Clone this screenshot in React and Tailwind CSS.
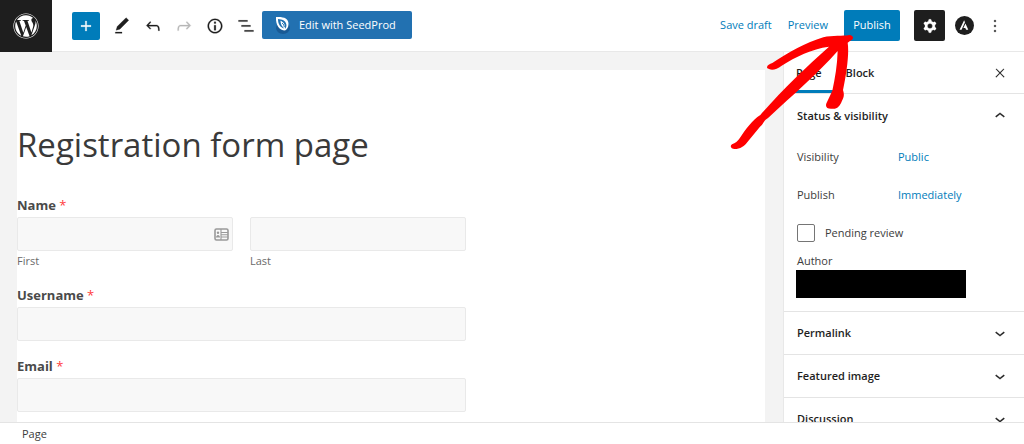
import { useState } from "react";
import { FaWordpress } from "react-icons/fa";

const icons = {
  plus: "M18 11.2h-5.2V6h-1.6v5.2H6v1.6h5.2V18h1.6v-5.2H18z",
  edit: "M20.1 5.1L16.9 2 6.2 12.7l-1.3 4.4 4.5-1.3L20.1 5.1zM4 20.8h8v-1.5H4v1.5z",
  undo: "M18.3 11.7c-.6-.6-1.4-.9-2.3-.9H6.7l2.9-3.3-1.1-1-4.5 5L8.5 16l1-1-2.7-2.7H16c.5 0 .9.2 1.3.5 1 1 1 3.4 1 4.5v.3h1.5v-.2c0-1.5 0-4.3-1.5-5.7z",
  redo: "M15.6 6.5l-1.1 1 2.9 3.3H8c-.9 0-1.7.3-2.3.9-1.4 1.5-1.4 4.2-1.4 5.6v.2h1.5v-.3c0-1.1 0-3.5 1-4.5.3-.3.7-.5 1.3-.5h9.2L14.5 15l1.1 1.1 4.6-4.6-4.6-5z",
  info: "M12 3.2c-4.8 0-8.8 3.9-8.8 8.8 0 4.8 3.9 8.8 8.8 8.8 4.8 0 8.8-3.9 8.8-8.8 0-4.8-4-8.8-8.8-8.8zm0 16c-4 0-7.2-3.3-7.2-7.2C4.8 8 8 4.8 12 4.8s7.2 3.3 7.2 7.2c0 4-3.2 7.2-7.2 7.2zM11 17h2v-6h-2v6zm0-8h2V7h-2v2z",
  list: "M13.8 5.2H3v1.5h10.8V5.2zm-3.6 12v1.5H21v-1.5H10.2zm7.2-6H6.6v1.5h10.8v-1.5z",
  close:
    "M13 11.8l6.1-6.3-1-1-6.1 6.2-6.1-6.2-1 1 6.1 6.3-6.5 6.7 1 1 6.5-6.6 6.5 6.6 1-1z",
  up: "M6.5 12.4L12 8l5.5 4.4-.9 1.2L12 10l-4.5 3.6-1-1.2z",
  down: "M17.5 11.6L12 16l-5.5-4.4.9-1.2L12 14l4.5-3.6 1 1.2z",
  more: "M13 19h-2v-2h2v2zm0-6h-2v-2h2v2zm0-6h-2V5h2v2z",
  cog: "M10.289 4.836A1 1 0 0111.275 4h1.306a1 1 0 01.987.836l.244 1.466c.787.26 1.503.679 2.108 1.218l1.393-.522a1 1 0 011.216.437l.653 1.13a1 1 0 01-.23 1.273l-1.148.944a6.025 6.025 0 010 2.435l1.149.946a1 1 0 01.23 1.272l-.653 1.13a1 1 0 01-1.216.437l-1.394-.522c-.605.54-1.32.958-2.108 1.218l-.244 1.466a1 1 0 01-.987.836h-1.306a1 1 0 01-.986-.836l-.244-1.466a5.995 5.995 0 01-2.108-1.218l-1.394.522a1 1 0 01-1.217-.436l-.653-1.131a1 1 0 01.23-1.272l1.149-.946a6.026 6.026 0 010-2.435l-1.148-.944a1 1 0 01-.23-1.272l.653-1.131a1 1 0 011.217-.437l1.393.522a5.994 5.994 0 012.108-1.218l.244-1.466zM14.929 12a3 3 0 11-6 0 3 3 0 016 0z",
};

function Icon({ name, className = "size-5" }) {
  return (
    <svg
      viewBox="0 0 24 24"
      fill="currentColor"
      fillRule="evenodd"
      stroke="currentColor"
      strokeWidth="0.3"
      className={className}
      aria-hidden="true"
    >
      <path d={icons[name]} />
    </svg>
  );
}

function ToolButton({ name, label, disabled }) {
  return (
    <button
      type="button"
      aria-label={label}
      disabled={disabled}
      className="flex h-8 w-[31px] items-center justify-center disabled:text-[#b8b8b8]"
    >
      <Icon name={name} />
    </button>
  );
}

function SeedProdLogo() {
  return (
    <svg viewBox="0 0 16 18" className="h-[18px] w-4" aria-hidden="true">
      <ellipse cx="8" cy="12" rx="7" ry="6" fill="#195a95" />
      <path
        d="M1 1c7-.6 12.500 1 12.500 7 0 3-1.500 5.500-3.500 6.500C4.500 14 .6 10 1 1z"
        fill="#fff"
      />
      <path
        d="M3 3c4 .2 7.500 1.500 8.300 5.200.4 2-.2 3.600-1.300 4.600C10 9 8 6 5.200 4.600 7.500 7 8.800 9.500 8.700 12.500 5 11 3 8 3 3z"
        fill="#2271b1"
      />
      <path d="M5.500 5c3 1 5 3.500 4.500 7.500C7 11 5.700 8.500 5.500 5z" fill="#fff" />
      <path d="M7 7c1.500 1 2.300 2.500 2.300 4.200" stroke="#2271b1" fill="none" />
    </svg>
  );
}

function ContactIcon() {
  return (
    <svg
      viewBox="0 0 15 13"
      className="absolute right-1 top-[11px] h-[13px] w-[15px]"
      fill="none"
      stroke="#999"
      aria-hidden="true"
    >
      <rect x="1" y="1" width="13" height="11" rx="1.5" strokeWidth="1.6" />
      <path d="M7 1v11M7 4.500h7M7 6.700h7M7 9h7" strokeWidth="1.1" />
      <circle cx="4" cy="4.800" r="1.200" fill="#999" stroke="none" />
      <path d="M2 9.500c0-3.500 4-3.500 4 0z" fill="#999" stroke="none" />
    </svg>
  );
}

function TopBar() {
  return (
    <header className="flex h-[52px] shrink-0 items-center border-b border-[#e8e8e8] bg-white">
      <a
        href="#dashboard"
        aria-label="View pages"
        className="flex size-[52px] shrink-0 items-center justify-center bg-[#1e1e1e] text-white"
      >
        <FaWordpress size={26} />
      </a>
      <button
        type="button"
        aria-label="Add block"
        className="ml-5 mr-[6px] flex size-7 items-center justify-center rounded-xs bg-[#007cba] text-white"
      >
        <Icon name="plus" />
      </button>
      <ToolButton name="edit" label="Tools" />
      <ToolButton name="undo" label="Undo" />
      <ToolButton name="redo" label="Redo" disabled />
      <ToolButton name="info" label="Details" />
      <ToolButton name="list" label="List view" />
      <button
        type="button"
        className="mb-px ml-px flex h-7 w-[150px] items-center gap-2 rounded-xs bg-[#2271b1] pl-[13px] text-[11px] text-white"
      >
        <SeedProdLogo />
        Edit with SeedProd
      </button>

      <div className="ml-auto flex items-center text-[11px]">
        <button type="button" className="mr-4 text-[#007cba]">
          Save draft
        </button>
        <button type="button" className="mr-4 text-[#007cba]">
          Preview
        </button>
        <button
          type="button"
          className="mr-[14px] h-[31px] w-14 rounded-xs bg-[#007cba] text-white"
        >
          Publish
        </button>
        <button
          type="button"
          aria-label="Settings"
          className="mr-[10px] flex size-[31px] items-center justify-center rounded-xs bg-[#1e1e1e] text-white"
        >
          <Icon name="cog" />
        </button>
        <button type="button" aria-label="Astra settings">
          <svg viewBox="0 0 20 20" className="size-[19px]" aria-hidden="true">
            <circle cx="10" cy="10" r="10" fill="#1e1e1e" />
            <path
              d="M9.600 4.500 4.800 14.500h2.100l3.600-7.800zM11 8l-2.200 4.600h2l.9 1.900H14z"
              fill="#fff"
            />
          </svg>
        </button>
        <button
          type="button"
          aria-label="Options"
          className="ml-[11px] mr-[19px] flex h-8 w-5 items-center justify-center"
        >
          <Icon name="more" />
        </button>
      </div>
    </header>
  );
}

function Required() {
  return <span className="font-normal text-[#ff3b3b]">*</span>;
}

const inputClass =
  "block h-[34px] w-full rounded-xs border border-[#e9e9e9] bg-[#f8f8f8] px-2 text-sm focus:outline-none focus:border-[#007cba]";

function TextField({ id, label, type = "text" }) {
  return (
    <div>
      <label htmlFor={id} className="mb-px block text-[13px] leading-[22px] font-bold">
        {label} <Required />
      </label>
      <input id={id} name={id} type={type} className={inputClass} />
    </div>
  );
}

function Canvas() {
  return (
    <main className="min-w-0 flex-1 overflow-hidden bg-[#f3f3f3] pl-[17px] pr-[18px] pt-[18px]">
      <div className="h-full bg-white pt-[50px] text-[#4a4a4a]">
        <h1 className="text-[33px] leading-[50px] text-[#3a3a3a]">
          Registration form page
        </h1>
        <form className="mt-6 flex max-w-[449px] flex-col gap-[14px]">
          <fieldset>
            <legend className="mb-px text-[13px] leading-[22px] font-bold">
              Name <Required />
            </legend>
            <div className="grid grid-cols-2 gap-[17px]">
              <div>
                <div className="relative">
                  <input id="first" name="first" type="text" className={inputClass} />
                  <ContactIcon />
                </div>
                <label htmlFor="first" className="block text-[11px] leading-[19px] text-[#6a6a6a]">
                  First
                </label>
              </div>
              <div>
                <input id="last" name="last" type="text" className={inputClass} />
                <label htmlFor="last" className="block text-[11px] leading-[19px] text-[#6a6a6a]">
                  Last
                </label>
              </div>
            </div>
          </fieldset>
          <TextField id="username" label="Username" />
          <TextField id="email" label="Email" type="email" />
        </form>
      </div>
    </main>
  );
}

function PanelTitle({ title, open, onClick }) {
  return (
    <h2>
      <button
        type="button"
        aria-expanded={open}
        onClick={onClick}
        className={`flex w-full items-center justify-between pl-[13px] pr-[14px] text-[11px] font-semibold ${
          open ? "h-11" : "h-[42px]"
        }`}
      >
        {title}
        <Icon name={open ? "up" : "down"} />
      </button>
    </h2>
  );
}

function Sidebar() {
  const [open, setOpen] = useState(true);
  const [pending, setPending] = useState(false);

  return (
    <aside className="w-[241px] shrink-0 overflow-hidden border-l border-[#e8e8e8] bg-white text-[11px]">
      <div className="flex h-[42px] items-stretch border-b border-[#e4e4e4] font-semibold">
        <button type="button" className="border-b-3 border-[#007cba] px-3 pt-[5px]">
          Page
        </button>
        <button type="button" className="border-b-3 border-transparent px-3 pt-[5px]">
          Block
        </button>
        <button
          type="button"
          aria-label="Close settings"
          className="ml-auto mr-[14px] flex w-5 items-center justify-center"
        >
          <Icon name="close" className="size-[14px]" />
        </button>
      </div>

      <section className="border-b border-[#e4e4e4]">
        <PanelTitle
          title="Status & visibility"
          open={open}
          onClick={() => setOpen(!open)}
        />
        {open && (
          <div className="px-[13px] pb-[13px] text-[#3c3c3c]">
            <div className="flex h-[38px] items-center">
              <span className="w-[101px]">Visibility</span>
              <button type="button" className="text-[#007cba]">
                Public
              </button>
            </div>
            <div className="flex h-[38px] items-center">
              <span className="w-[101px]">Publish</span>
              <button type="button" className="text-[#007cba]">
                Immediately
              </button>
            </div>
            <label className="flex h-[38px] items-center gap-[10px]">
              <input
                type="checkbox"
                checked={pending}
                onChange={(e) => setPending(e.target.checked)}
                className="size-[18px] appearance-none rounded-xs border border-[#757575] bg-white checked:bg-[#007cba]"
              />
              Pending review
            </label>
            <label htmlFor="author" className="block leading-[18px]">
              Author
            </label>
            <select
              id="author"
              className="-ml-px block h-7 w-[170px] appearance-none bg-black text-black"
            />
          </div>
        )}
      </section>
      <section className="border-b border-[#e4e4e4]">
        <PanelTitle title="Permalink" />
      </section>
      <section className="border-b border-[#e4e4e4]">
        <PanelTitle title="Featured image" />
      </section>
      <section>
        <PanelTitle title="Discussion" />
      </section>
    </aside>
  );
}

// hand-drawn arrow pointing at the publish button
function Arrow() {
  return (
    <svg
      viewBox="69 93 402 360"
      fill="#fe0000"
      className="pointer-events-none absolute right-[167px] top-[31px] h-[120px] w-[134px]"
      aria-hidden="true"
    >
      <path d="M202 205C198 197 208 193 217 189C262 160 318 127 370 112C397 105 430 109 448 105C460 106 464 117 451 122L443 128C448 160 440 218 429 270C434 284 431 294 426 302C419 320 410 328 397 326C382 328 374 320 380 308L397 272C405 236 412 194 413 153C350 224 282 282 205 353C190 362 192 370 180 380L143 425C134 438 120 447 104 447C94 447 88 438 96 433C106 430 113 424 119 415C137 388 157 360 181 345C249 267 316 203 387 140C334 147 288 170 245 197C229 208 216 213 202 205Z" />
    </svg>
  );
}

function App() {
  return (
    <div className="relative flex h-screen flex-col overflow-hidden bg-white font-['Open_Sans','Noto_Sans',sans-serif] text-[#1e1e1e]">
      <TopBar />
      <div className="flex min-h-0 flex-1">
        <Canvas />
        <Sidebar />
      </div>
      <footer className="flex h-[22px] shrink-0 items-center border-t border-[#e4e4e4] pl-[22px] pt-px text-[11px] text-[#3c3c3c]">
        Page
      </footer>
      <Arrow />
    </div>
  );
}

export default App;
